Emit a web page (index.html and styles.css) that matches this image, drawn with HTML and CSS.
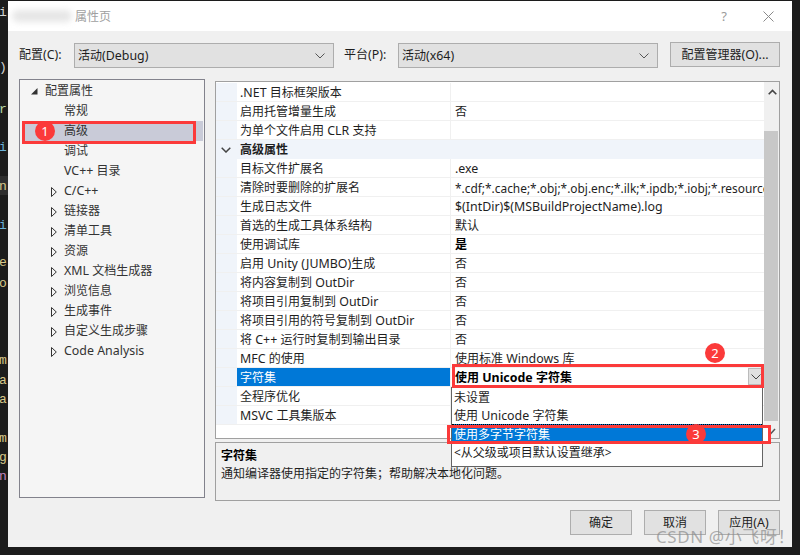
FILE: index.html
```html
<!DOCTYPE html>
<html lang="zh-CN">
<head>
<meta charset="utf-8">
<title>属性页</title>
<link rel="stylesheet" href="styles.css">
</head>
<body>
<div class="code-bits">
  <span class="cb cb-w c1">i</span><span class="cb cb-w c2">)</span><span class="cb cb-g c3">r</span><span class="cb cb-b c4">i</span><span class="cb cb-y c5">n</span><span class="cb cb-b c6">i</span><span class="cb cb-y c7">e</span><span class="cb cb-y c8">o</span><span class="cb cb-y c9">m</span><span class="cb cb-y c10">a</span><span class="cb cb-y c11">a</span><span class="cb cb-y c12">m</span><span class="cb cb-y c13">g</span><span class="cb cb-p c14">n</span>
</div>
<main class="dialog">
  <header class="titlebar">
    <span class="smudge"></span>
    <span class="title">属性页</span>
    <span class="help">?</span>
    <svg class="close" width="11" height="11" viewBox="0 0 11 11"><path d="M.5.5l10 10M10.500.5l-10 10" stroke="#8a8a8a" fill="none"/></svg>
  </header>
  <div class="body">
    <div class="toolbar">
      <label class="lbl lbl-config">配置<span class="l">(C):</span></label>
      <div class="combo combo-config"><span>活动<span class="l">(Debug)</span></span><svg class="chev" width="10" height="6" viewBox="0 0 10 6"><path d="M.5.5L5 5 9.500.5" stroke="#555" fill="none"/></svg></div>
      <label class="lbl lbl-platform">平台<span class="l">(P):</span></label>
      <div class="combo combo-platform"><span>活动<span class="l">(x64)</span></span><svg class="chev" width="10" height="6" viewBox="0 0 10 6"><path d="M.5.5L5 5 9.500.5" stroke="#555" fill="none"/></svg></div>
      <button class="btn btn-mgr">配置管理器<span class="l">(O)...</span></button>
    </div>
    <div class="panes">
      <nav class="tree">
        <div class="node root"><svg class="tw" width="7" height="7" viewBox="0 0 7 7"><path d="M6.500 0V6.500H0z" fill="#333"/></svg>配置属性</div>
        <div class="node leaf">常规</div>
        <div class="node leaf sel">高级</div>
        <div class="node leaf">调试</div>
        <div class="node leaf"><span class="l">VC++ </span>目录</div>
        <div class="node"><svg class="tr" width="6" height="10" viewBox="0 0 6 10"><path d="M.5.5L5.300 5 .5 9.500z" stroke="#333" fill="none"/></svg><span class="l">C/C++</span></div>
        <div class="node"><svg class="tr" width="6" height="10" viewBox="0 0 6 10"><path d="M.5.5L5.300 5 .5 9.500z" stroke="#333" fill="none"/></svg>链接器</div>
        <div class="node"><svg class="tr" width="6" height="10" viewBox="0 0 6 10"><path d="M.5.5L5.300 5 .5 9.500z" stroke="#333" fill="none"/></svg>清单工具</div>
        <div class="node"><svg class="tr" width="6" height="10" viewBox="0 0 6 10"><path d="M.5.5L5.300 5 .5 9.500z" stroke="#333" fill="none"/></svg>资源</div>
        <div class="node"><svg class="tr" width="6" height="10" viewBox="0 0 6 10"><path d="M.5.5L5.300 5 .5 9.500z" stroke="#333" fill="none"/></svg><span class="l">XML </span>文档生成器</div>
        <div class="node"><svg class="tr" width="6" height="10" viewBox="0 0 6 10"><path d="M.5.5L5.300 5 .5 9.500z" stroke="#333" fill="none"/></svg>浏览信息</div>
        <div class="node"><svg class="tr" width="6" height="10" viewBox="0 0 6 10"><path d="M.5.5L5.300 5 .5 9.500z" stroke="#333" fill="none"/></svg>生成事件</div>
        <div class="node"><svg class="tr" width="6" height="10" viewBox="0 0 6 10"><path d="M.5.5L5.300 5 .5 9.500z" stroke="#333" fill="none"/></svg>自定义生成步骤</div>
        <div class="node"><svg class="tr" width="6" height="10" viewBox="0 0 6 10"><path d="M.5.5L5.300 5 .5 9.500z" stroke="#333" fill="none"/></svg><span class="l">Code Analysis</span></div>
      </nav>
      <div class="right">
        <section class="grid">
          <div class="rows">
            <div class="row"><div class="name"><span class="l">.NET </span>目标框架版本</div><div class="val"></div></div>
            <div class="row"><div class="name">启用托管增量生成</div><div class="val">否</div></div>
            <div class="row"><div class="name">为单个文件启用<span class="l"> CLR </span>支持</div><div class="val"></div></div>
            <div class="row group"><svg class="gchev" width="10" height="6" viewBox="0 0 10 6"><path d="M.7.7L5 5 9.300.7" stroke="#444" stroke-width="1.500" fill="none"/></svg><div class="name">高级属性</div></div>
            <div class="row"><div class="name">目标文件扩展名</div><div class="val"><span class="l">.exe</span></div></div>
            <div class="row"><div class="name">清除时要删除的扩展名</div><div class="val"><span class="ext">*.cdf;*.cache;*.obj;*.obj.enc;*.ilk;*.ipdb;*.iobj;*.resource</span></div></div>
            <div class="row"><div class="name">生成日志文件</div><div class="val"><span class="l">$(IntDir)$(MSBuildProjectName).log</span></div></div>
            <div class="row"><div class="name">首选的生成工具体系结构</div><div class="val">默认</div></div>
            <div class="row"><div class="name">使用调试库</div><div class="val strong">是</div></div>
            <div class="row"><div class="name">启用<span class="l"> Unity (JUMBO)</span>生成</div><div class="val">否</div></div>
            <div class="row"><div class="name">将内容复制到<span class="l"> OutDir</span></div><div class="val">否</div></div>
            <div class="row"><div class="name">将项目引用复制到<span class="l"> OutDir</span></div><div class="val">否</div></div>
            <div class="row"><div class="name">将项目引用的符号复制到<span class="l"> OutDir</span></div><div class="val">否</div></div>
            <div class="row"><div class="name">将<span class="l"> C++ </span>运行时复制到输出目录</div><div class="val">否</div></div>
            <div class="row"><div class="name"><span class="l">MFC </span>的使用</div><div class="val">使用标准<span class="l"> Windows </span>库</div></div>
            <div class="row active"><div class="name">字符集</div><div class="val strong">使用<span class="l"> Unicode </span>字符集<span class="dd-btn"><svg width="10" height="6" viewBox="0 0 10 6"><path d="M.5.5L5 5 9.500.5" stroke="#444" fill="none"/></svg></span></div></div>
            <div class="row"><div class="name">全程序优化</div><div class="val"></div></div>
            <div class="row"><div class="name"><span class="l">MSVC </span>工具集版本</div><div class="val"></div></div>
          </div>
          <div class="sbar">
            <svg class="sb-up" width="9" height="6" viewBox="0 0 9 6"><path d="M.7 5.300L4.500 1.500 8.300 5.300" stroke="#444" stroke-width="1.600" fill="none"/></svg>
            <div class="thumb"></div>
            <svg class="sb-down" width="7" height="7" viewBox="0 0 7 7"><path d="M1 6.500L6 1" stroke="#555" stroke-width="1.500" fill="none"/></svg>
          </div>
        </section>
        <section class="desc">
          <div class="desc-t">字符集</div>
          <div>通知编译器使用指定的字符集；帮助解决本地化问题。</div>
        </section>
      </div>
    </div>
    <div class="actions">
      <button class="btn btn-act">确定</button>
      <button class="btn btn-act">取消</button>
      <button class="btn btn-act">应用<span class="l">(A)</span></button>
    </div>
  </div>
</main>
<div class="dropdown">
  <div class="dd-item">未设置</div>
  <div class="dd-item">使用<span class="l"> Unicode </span>字符集</div>
  <div class="dd-item hl">使用多字节字符集</div>
  <div class="dd-item last">&lt;从父级或项目默认设置继承&gt;</div>
</div>
<div class="mark m1"></div>
<div class="mark m2"></div>
<div class="mark m3"></div>
<div class="badge b1">1</div>
<div class="badge b2">2</div>
<div class="badge b3">3</div>
<div class="wm">CSDN @小飞呀！</div>
</body>
</html>
```
FILE: styles.css
```css
* { box-sizing: border-box; }
html, body { margin: 0; height: 100%; }
body {
  background: #1c1c1c;
  width: 800px;
  height: 555px;
  overflow: hidden;
  position: relative;
  padding: 1px 8px 8px 8px;
  font-family: "Noto Sans", "Noto Sans CJK SC", sans-serif;
  font-size: 12px;
  line-height: 19px;
  color: #1e1e1e;
}
.l { font-size: 12.400px; }
.ext { font-size: 11.900px; }
.cb { position: absolute; left: -1px; font-family: "Liberation Mono", monospace; font-size: 13px; line-height: 14px; }
.cb-w { color: #d4d4d4; } .cb-g { color: #b8d7a3; } .cb-b { color: #6ab0d8; } .cb-y { color: #d8c98a; } .cb-p { color: #c586c0; }
.c1 { top: 6px; } .c2 { top: 61px; } .c3 { top: 103px; } .c4 { top: 141px; } .c6 { top: 219px; } .c7 { top: 256px; } .c8 { top: 277px; }
.c5 { top: 176px; width: 9px; height: 19px; line-height: 21px; background: #2e2e2e; }
.c9 { top: 354px; } .c10 { top: 374px; } .c11 { top: 393px; } .c12 { top: 432px; } .c13 { top: 451px; } .c14 { top: 470px; }

.dialog { width: 784px; height: 546px; background: #f0f0f0; display: flex; flex-direction: column; }
.titlebar { height: 30px; background: #fff; flex: none; display: flex; align-items: center; padding: 0 18px 0 4px; }
.smudge { width: 60px; height: 12px; border-radius: 6px; background: #e6e6e6; filter: blur(3px); margin-right: 3px; }
.title { color: #a0a0a0; font-size: 12px; }
.help { margin-left: auto; color: #9a9a9a; font-size: 13px; margin-right: 36px; }
.close { flex: none; }

.body { flex: 1; display: flex; flex-direction: column; padding: 11px 12px 12px 11px; }
.toolbar { display: flex; align-items: flex-start; height: 26px; flex: none; }
.lbl { flex: none; line-height: 26px; }
.lbl-config { width: 55px; }
.lbl-platform { width: 54px; margin-left: 10px; }
.combo { height: 25px; background: #e1e1e1; border: 1px solid #adadad; display: flex; align-items: center; justify-content: space-between; padding: 0 8px 0 3px; flex: none; margin-top: 1px; }
.combo-config { width: 260px; }
.combo-platform { width: 260px; }
.btn { font: inherit; color: #1e1e1e; background: #e1e1e1; border: 1px solid #adadad; padding: 0; }
.btn-mgr { width: 110px; height: 25px; margin-left: 12px; }

.panes { display: flex; margin-top: 11px; flex: none; height: 422px; }
.tree { width: 186px; height: 419px; background: #f5f5f5; border: 1px solid #82828c; padding: 1px 0 0 2px; flex: none; margin-right: 10px; }
.node { height: 20px; line-height: 20px; padding-left: 42px; position: relative; color: #333; width: 181px; white-space: nowrap; }
.root { padding-left: 23px; }
.tw { position: absolute; left: 9px; top: 7px; }
.tr { position: absolute; left: 29px; top: 6px; }
.sel { background: #c9cbd8; }

.right { flex: 1; display: flex; flex-direction: column; gap: 3px; padding-top: 2px; }
.grid { height: 358px; background: #fff; border: 1px solid #a0a0a0; display: flex; flex: none; }
.rows { width: 548px; flex: none; padding-top: 1px; }
.row { height: 19px; display: flex; background: #f0f4fa; padding-left: 21px; border-bottom: 1px solid #f0f0f0; white-space: nowrap; position: relative; }
.name { width: 214px; background: #fff; padding-left: 3px; flex: none; border-right: 1px solid #f0f0f0; line-height: 20px; overflow: hidden; }
.val { flex: 1; background: #fff; padding-left: 4px; overflow: hidden; line-height: 20px; position: relative; }
.strong { font-weight: 700; color: #000; }
.group .name { background: transparent; font-weight: 700; border: 0; flex: 1; }
.group { border-bottom: 0; }
.gchev { position: absolute; left: 5px; top: 7px; }
.active .name { background: #0078d7; color: #fff; }
.dd-btn { position: absolute; right: 0; top: 0; width: 16px; height: 17px; background: #e0e0e0; border: 1px solid #bbb; display: flex; align-items: center; justify-content: center; }
.sbar { flex: 1; background: #f0f0f0; position: relative; }
.sb-up { position: absolute; left: 4px; top: 7px; }
.sb-down { position: absolute; left: 5px; top: 346px; }
.thumb { position: absolute; left: 0; right: 1px; top: 49px; height: 290px; background: #c8c8c8; }

.desc { height: 59px; background: #f0f0f0; border: 1px solid #a0a0a0; padding: 4px 5px; flex: none; line-height: 18px; }
.desc-t { font-weight: 700; color: #000; }

.actions { display: flex; justify-content: flex-end; gap: 12px; margin-top: 9px; flex: none; }
.btn-act { width: 62px; height: 25px; }

.dropdown { position: absolute; left: 451px; top: 387px; width: 312px; height: 80px; background: #fff; border: 1px solid #646464; padding: 1px 0 0 0; }
.dd-item { height: 18px; line-height: 18px; padding-left: 2px; white-space: nowrap; }
.hl { background: #0078d7; color: #fff; height: 19px; line-height: 16px; margin-top: -1px; border-top: 1px dotted #000; padding-top: 2px; }
.last { margin-top: 1px; }

.mark { position: absolute; border: 3px solid #fb3a3a; }
.m1 { left: 22px; top: 121px; width: 174px; height: 23px; }
.m2 { left: 452px; top: 364px; width: 312px; height: 24px; }
.m3 { left: 447px; top: 425px; width: 324px; height: 19px; }
.m3::after { content: ""; position: absolute; right: 0; top: 0; bottom: 0; width: 5px; background: #fff; }
.badge { position: absolute; width: 20px; height: 20px; border-radius: 50%; background: #fb3a3a; color: #fff; text-align: center; line-height: 20px; font-size: 13px; }
.b1 { left: 35px; top: 121px; }
.b2 { left: 705px; top: 343px; }
.b3 { left: 686px; top: 424px; }
.wm { position: absolute; left: 656px; top: 527px; font-size: 17px; line-height: 20px; color: rgba(140,140,140,.7); letter-spacing: .6px; white-space: nowrap; }
```
